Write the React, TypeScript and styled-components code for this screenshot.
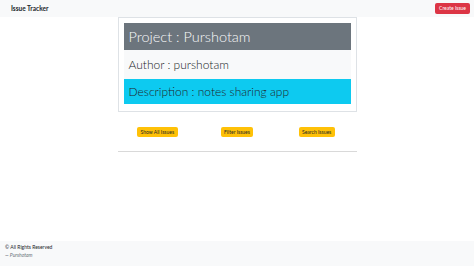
import styled, { createGlobalStyle } from 'styled-components'

const GlobalStyle = createGlobalStyle`
  * { box-sizing: border-box; }
  html, body { margin: 0; padding: 0; background: #fff; }
  body {
    font-family: Lato, 'Open Sans', sans-serif;
    color: #212529;
  }
`

const Page = styled.div`
  width: 474px;
  height: 266px;
  display: flex;
  flex-direction: column;
`

const Navbar = styled.nav`
  height: 17px;
  background: #f8f9fa;
  display: flex;
  align-items: center;
  justify-content: space-between;
  padding: 0 4px 0 11px;
`

const Brand = styled.span`
  font-size: 6.5px;
  font-weight: 700;
  color: #212529;
`

const Button = styled.button<{ $variant: 'danger' | 'warning' }>`
  border: none;
  border-radius: 2px;
  font-family: inherit;
  font-size: 5px;
  line-height: 1;
  cursor: pointer;
  background: ${({ $variant }) => ($variant === 'danger' ? '#dc3545' : '#ffc107')};
  color: ${({ $variant }) => ($variant === 'danger' ? '#fff' : '#212529')};
`

const NavButton = styled(Button)`
  height: 11px;
  padding: 0 4px;
`

const Main = styled.main`
  flex: 1;
  width: 239px;
  margin: 0 auto;
  display: flex;
  flex-direction: column;
`

const Card = styled.section`
  border: 1px solid #dee2e6;
  padding: 5px 5px 7px;
  display: flex;
  flex-direction: column;
`

const Row = styled.div<{ $bg: string; $color: string; $size: number; $h: number }>`
  height: ${({ $h }) => $h}px;
  background: ${({ $bg }) => $bg};
  color: ${({ $color }) => $color};
  font-size: ${({ $size }) => $size}px;
  font-weight: 300;
  display: flex;
  align-items: center;
  padding-left: 5px;
  white-space: nowrap;
`

const Actions = styled.div`
  display: grid;
  grid-template-columns: repeat(3, 1fr);
  justify-items: center;
  margin-top: 15px;
`

const ActionButton = styled(Button)`
  height: 10px;
  padding: 0 3.5px;
`

const Divider = styled.hr`
  border: none;
  border-top: 1px solid #d9d9d9;
  margin: 14px 0 0;
`

const Footer = styled.footer`
  height: 25px;
  background: #f8f9fa;
  padding: 3px 5px 0;
  display: flex;
  flex-direction: column;
  gap: 2px;
`

const FooterText = styled.span`
  font-size: 5px;
  color: #212529;
`

const Signature = styled.span`
  font-size: 5px;
  font-style: italic;
  color: #6c757d;
`

export default function App() {
  return (
    <>
      <GlobalStyle />
      <Page>
        <Navbar>
          <Brand>Issue Tracker</Brand>
          <NavButton $variant="danger">Create Issue</NavButton>
        </Navbar>
        <Main>
          <Card>
            <Row $bg="#6c757d" $color="#f8f9fa" $size={14.5} $h={27}>
              Project : Purshotam
            </Row>
            <Row $bg="#f8f9fa" $color="#212529" $size={12} $h={29}>
              Author : purshotam
            </Row>
            <Row $bg="#0dcaf0" $color="#212529" $size={12} $h={25}>
              Description : notes sharing app
            </Row>
          </Card>
          <Actions>
            <ActionButton $variant="warning">Show All Issues</ActionButton>
            <ActionButton $variant="warning">Filter Issues</ActionButton>
            <ActionButton $variant="warning">Search Issues</ActionButton>
          </Actions>
          <Divider />
        </Main>
        <Footer>
          <FooterText>© All Rights Reserved</FooterText>
          <Signature>— Purshotam</Signature>
        </Footer>
      </Page>
    </>
  )
}
